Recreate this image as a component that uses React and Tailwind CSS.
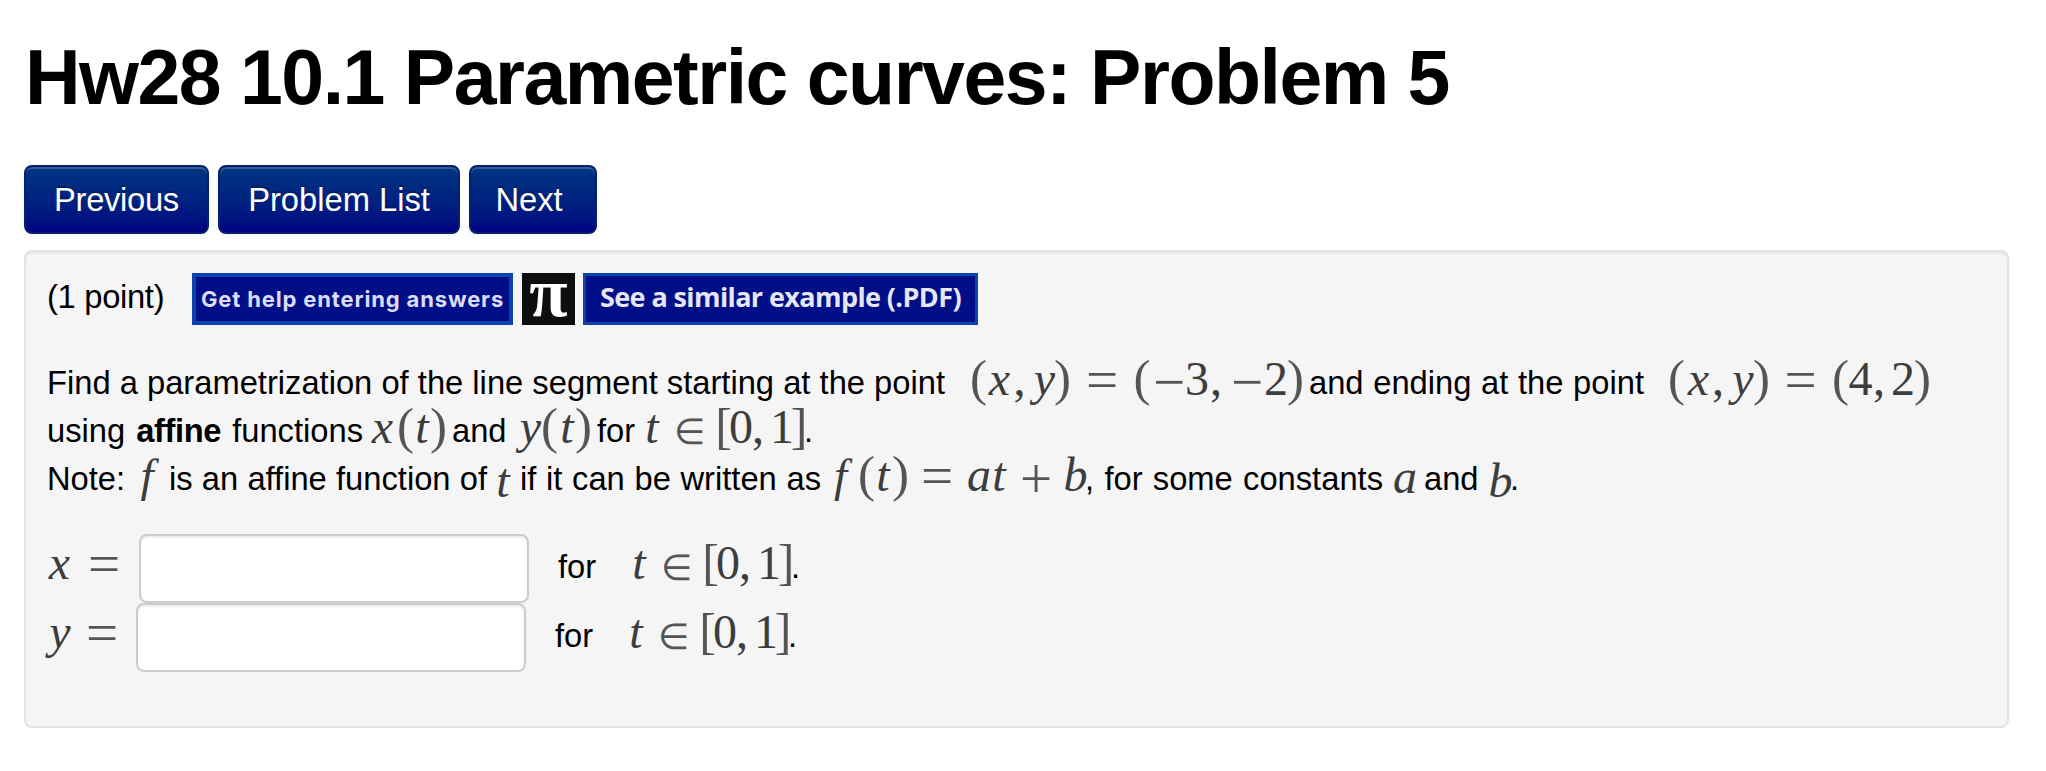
import React from "react";

const italics = ["x", "y", "t", "f", "a", "b"];

function glyphStyle(char) {
  if (char === "f") return "text-[47px] italic pr-[5px]";
  if (italics.includes(char)) return "text-[48px] italic";
  if (char === "(" || char === ")") return "text-[51px] text-[#555]";
  if (char === "[") return "text-[50px] text-[#555]";
  if (char === "]") return "text-[50px] text-[#555] pl-[3px]";
  if (char === "=") return "text-[57px] text-[#555] translate-y-[4px]";
  if (char === "−") return "text-[57px] text-[#555] translate-y-[6px]";
  if (char === "+") return "text-[57px] text-[#555] translate-y-[7px]";
  if (char === "∈") return "text-[36px] text-[#555] translate-y-px";
  return "text-[48px]";
}

// tokens: [character, spacing classes]
function Formula({ tokens }) {
  return (
    <span className="flex translate-y-px items-baseline font-['Liberation_Serif'] text-[#3d3d3d]">
      {tokens.map(([char, spacing], i) => (
        <span key={i} className={`flex shrink-0 justify-center leading-[0] ${glyphStyle(char)} ${spacing}`}>
          {char}
        </span>
      ))}
    </span>
  );
}

function Words({ className = "", children }) {
  return (
    <span className={`shrink-0 whitespace-nowrap leading-[0] [text-align-last:justify] ${className}`}>
      {children}
    </span>
  );
}

function Line({ children }) {
  return (
    <div className="flex h-12 items-baseline">
      <span className="h-10 w-0" />
      {children}
    </div>
  );
}

function NavButton({ className, children }) {
  return (
    <button
      className={`h-[69px] rounded-lg border-2 border-[#04226b] bg-linear-to-b from-[#003580] to-[#000080] text-[32.7px] text-white shadow-[inset_0_2px_0_rgba(255,255,255,0.2),0_2px_4px_rgba(0,0,0,0.05)] [text-shadow:0_-2px_0_rgba(0,0,0,0.25)] ${className}`}
    >
      {children}
    </button>
  );
}

const startPoint = [
  ["(", "ml-[28px] w-[11px]"],
  ["x", "ml-[4px] w-[23px]"],
  [",", "ml-[5px] w-[7px]"],
  ["y", "ml-[11px] w-[21px]"],
  [")", "ml-[2px] w-[11px]"],
  ["=", "ml-[19px] w-[30px]"],
  ["(", "ml-[20px] w-[10px]"],
  ["−", "ml-[8px] w-[28px]"],
  ["3", "ml-[4px] w-[20px]"],
  [",", "ml-[6px] w-[6px]"],
  ["−", "ml-[14px] w-[28px]"],
  ["2", "ml-[5px] w-[20px]"],
  [")", "ml-[4px] w-[11px]"],
];

const endPoint = [
  ["(", "ml-[27px] w-[11px]"],
  ["x", "ml-[5px] w-[23px]"],
  [",", "ml-[5px] w-[6px]"],
  ["y", "ml-[12px] w-[20px]"],
  [")", "ml-[3px] w-[11px]"],
  ["=", "ml-[18px] w-[31px]"],
  ["(", "ml-[19px] w-[11px]"],
  ["4", "ml-[4px] w-[21px]"],
  [",", "ml-[5px] w-[6px]"],
  ["2", "ml-[11px] w-[20px]"],
  [")", "ml-[4px] w-[11px]"],
];

const xOfT = [
  ["x", "ml-[8px] w-[23px]"],
  ["(", "ml-[6px] w-[11px]"],
  ["t", "ml-[4px] w-[14px]"],
  [")", "ml-[4px] w-[11px]"],
];

const yOfT = [
  ["y", "ml-[13px] w-[21px]"],
  ["(", "ml-[3px] w-[11px]"],
  ["t", "ml-[5px] w-[14px]"],
  [")", "ml-[4px] w-[11px]"],
];

const interval = [
  ["t", "w-[14px]"],
  ["∈", "ml-[18px] w-[25px]"],
  ["[", "ml-[18px] w-[7px]"],
  ["0", "ml-[4px] w-[20px]"],
  [",", "ml-[4px] w-[6px]"],
  ["1", "ml-[14px] w-[14px]"],
  ["]", "ml-[5px] w-[7px]"],
];

const affineForm = [
  ["f", "ml-[10px] w-[24px]"],
  ["(", "ml-[6px] w-[11px]"],
  ["t", "ml-[4px] w-[14px]"],
  [")", "ml-[5px] w-[11px]"],
  ["=", "ml-[16px] w-[30px]"],
  ["a", "ml-[17px] w-[20px]"],
  ["t", "ml-[3px] w-[14px]"],
  ["+", "ml-[15px] w-[30px]"],
  ["b", "ml-[16px] w-[17px]"],
];

function AnswerRow({ tokens, inputClass }) {
  return (
    <div className="flex h-[69px] items-baseline">
      <span className="h-11 w-0" />
      <Formula tokens={tokens} />
      <input
        type="text"
        className={`h-[69px] w-[390px] shrink-0 self-start rounded-lg border-2 border-[#ccc] bg-white shadow-[inset_0_2px_2px_rgba(0,0,0,0.075)] ${inputClass}`}
      />
      <Words className="ml-[29px] w-[39px]">for</Words>
      <span className="ml-[35px]">
        <Formula tokens={interval} />
      </span>
      <Words className="ml-[3px]">.</Words>
    </div>
  );
}

function App() {
  return (
    <div className="min-h-[771px] bg-white pl-6 pr-[37px] pt-[33px] font-['Liberation_Sans',Arial,sans-serif] text-black">
      <h1 className="h-[132px] whitespace-nowrap pl-px text-[77px] font-bold leading-[88px] tracking-[-1.5px]">
        Hw28 10.1 Parametric curves: Problem 5
      </h1>

      <div className="flex">
        <NavButton className="w-[185px] tracking-[-0.3px]">Previous</NavButton>
        <NavButton className="ml-[9px] w-[242px]">Problem List</NavButton>
        <NavButton className="ml-[9px] w-[128px] pr-2">Next</NavButton>
      </div>

      <div className="mt-4 h-[478px] rounded-lg border-2 border-[#e3e3e3] bg-[#f5f5f5] pl-[21px] pt-[21px] text-[32.7px] shadow-[inset_0_2px_2px_rgba(0,0,0,0.05)]">
        <div className="flex h-[81px] items-start">
          <span className="w-[145px] whitespace-nowrap leading-[48px] tracking-[-0.3px]">(1 point)</span>
          <a className="flex h-[52px] w-[321px] items-center justify-center whitespace-nowrap border-4 border-[#0c44ad] bg-[#000f87] font-[Inter] text-[22px] font-bold tracking-[0.85px] text-[#dcdcf8]">
            Get help entering answers
          </a>
          <a className="ml-[9px] flex h-[52px] w-[53px] items-center justify-center bg-[#0c0f0d] pb-[12px] font-['Liberation_Serif'] text-[70px] font-bold leading-[0] text-white">
            π
          </a>
          <a className="ml-2 flex h-[52px] w-[395px] items-center justify-center whitespace-nowrap border-[3px] border-[#0c44ad] bg-[#000f87] pb-1 font-['Open_Sans'] text-[27px] font-bold tracking-[-0.6px] text-[#e6e6f5]">
            See a similar example (.PDF)
          </a>
        </div>

        <Line>
          <Words className="w-[898px]">Find a parametrization of the line segment starting at the point</Words>
          <Formula tokens={startPoint} />
          <Words className="ml-[8px] w-[335px]">and ending at the point</Words>
          <Formula tokens={endPoint} />
        </Line>
        <Line>
          <Words className="w-[316px]">
            using <b className="tracking-[-0.4px]">affine</b> functions
          </Words>
          <Formula tokens={xOfT} />
          <Words className="ml-[8px] w-[55px]">and</Words>
          <Formula tokens={yOfT} />
          <Words className="ml-[8px] w-[39px]">for</Words>
          <span className="ml-[9px]">
            <Formula tokens={interval} />
          </span>
          <Words className="ml-[3px]">.</Words>
        </Line>
        <Line>
          <Words className="w-[79px]">Note:</Words>
          <Formula tokens={[["f", "ml-[12px] w-[23px]"]]} />
          <Words className="ml-[8px] w-[318px]">is an affine function of</Words>
          <span className="translate-y-[6px]">
            <Formula tokens={[["t", "ml-[9px] w-[14px]"]]} />
          </span>
          <Words className="ml-[10px] w-[301px]">if it can be written as</Words>
          <Formula tokens={affineForm} />
          <Words className="ml-px w-[298px]">, for some constants</Words>
          <span className="translate-y-[2px]">
            <Formula tokens={[["a", "ml-[12px] w-[20px]"]]} />
          </span>
          <Words className="ml-[9px] w-[56px]">and</Words>
          <span className="translate-y-[6px]">
            <Formula tokens={[["b", "ml-[12px] w-[17px]"]]} />
          </span>
          <Words className="ml-px">.</Words>
        </Line>

        <div className="mt-9">
          <AnswerRow
            tokens={[
              ["x", "ml-[1px] w-[23px]"],
              ["=", "ml-[18px] w-[30px]"],
            ]}
            inputClass="ml-[20px]"
          />
          <AnswerRow
            tokens={[
              ["y", "ml-[2px] w-[22px]"],
              ["=", "ml-[16px] w-[30px]"],
            ]}
            inputClass="ml-[19px]"
          />
        </div>
      </div>
    </div>
  );
}

export default App;
